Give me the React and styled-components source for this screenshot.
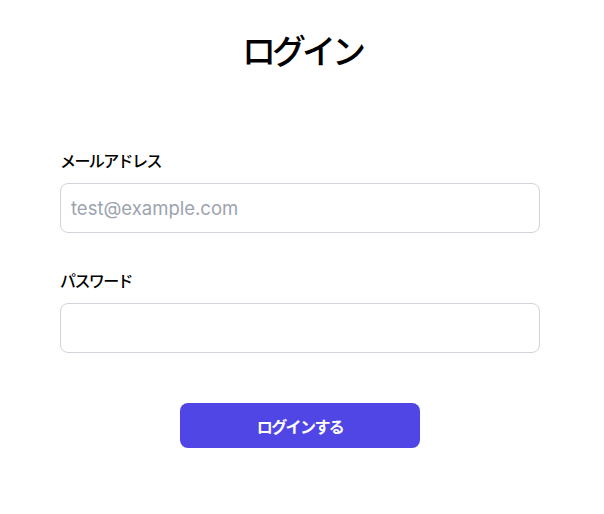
import React from 'react';
import styled, { createGlobalStyle } from 'styled-components';

const GlobalStyle = createGlobalStyle`
  body {
    margin: 0;
    background: #ffffff;
    font-family: "Noto Sans CJK JP", "Noto Sans", sans-serif;
    color: #000000;
  }
`;

const Page = styled.div`
  width: 480px;
  margin: 0 0 0 60px;
  padding-top: 26px;
  display: flex;
  flex-direction: column;
`;

const Title = styled.h1`
  margin: 0 0 74px;
  padding-left: 4px;
  text-align: center;
  font-size: 34px;
  line-height: 48px;
  font-weight: 500;
  letter-spacing: -4px;
`;

const Field = styled.div`
  display: flex;
  flex-direction: column;
  gap: 11px;
  margin-bottom: 35px;
`;

const Label = styled.label`
  font-size: 16px;
  line-height: 24px;
  font-weight: 500;
  letter-spacing: -1.6px;
`;

const Input = styled.input`
  box-sizing: border-box;
  width: 100%;
  height: 50px;
  border: 1px solid #d1d5db;
  border-radius: 8px;
  padding: 0 10px;
  font-family: Inter, "Noto Sans", sans-serif;
  font-size: 18.5px;
  outline: 0;
  &::placeholder {
    color: #9ca3af;
  }
`;

const ButtonRow = styled.div`
  display: flex;
  justify-content: center;
  margin-top: 15px;
`;

const Button = styled.button`
  width: 240px;
  height: 45px;
  border: 0;
  border-radius: 8px;
  background-color: #4f46e5;
  color: #ffffff;
  font-family: "Noto Sans CJK JP", sans-serif;
  font-size: 16px;
  font-weight: 700;
  letter-spacing: -1.6px;
  cursor: pointer;
`;

export default function App() {
  return (
    <>
      <GlobalStyle />
      <Page>
        <Title>ログイン</Title>
        <Field>
          <Label>メールアドレス</Label>
          <Input type="email" placeholder="test@example.com" />
        </Field>
        <Field>
          <Label>パスワード</Label>
          <Input type="password" />
        </Field>
        <ButtonRow>
          <Button>ログインする</Button>
        </ButtonRow>
      </Page>
    </>
  );
}
